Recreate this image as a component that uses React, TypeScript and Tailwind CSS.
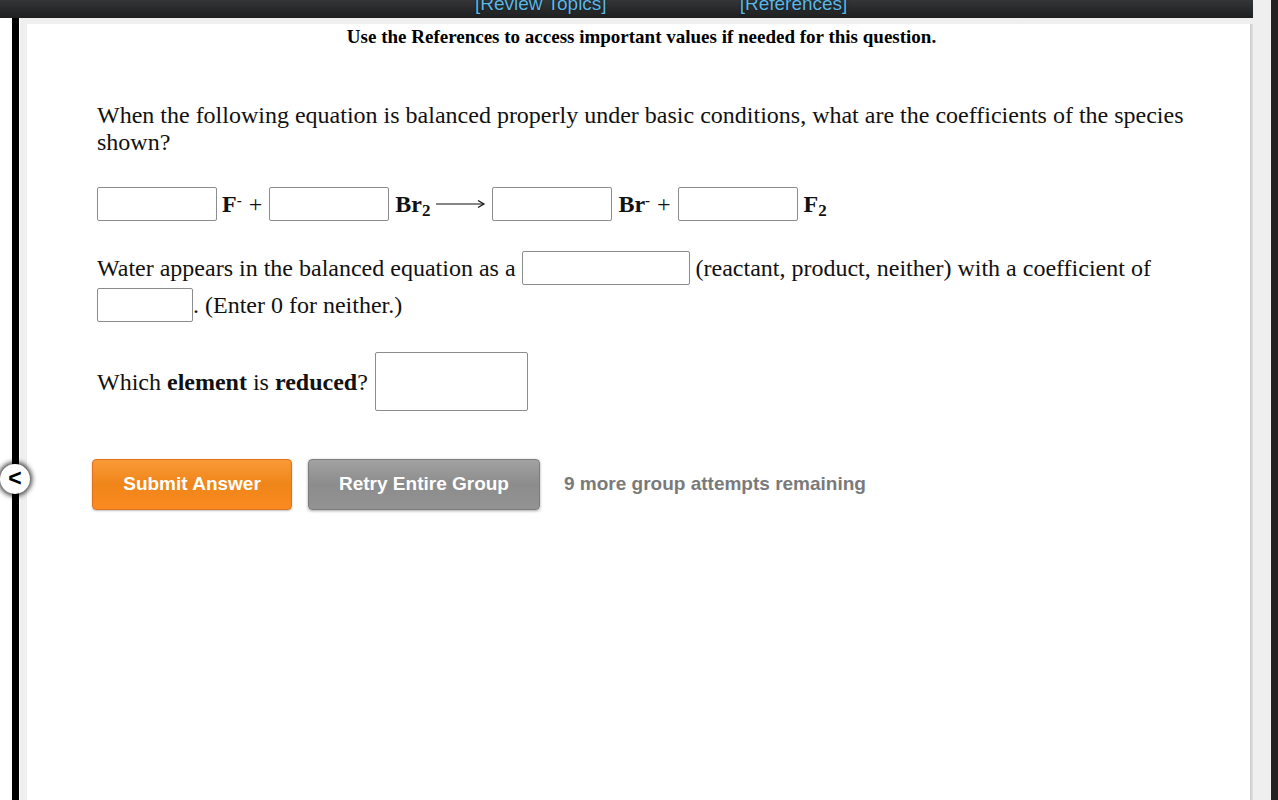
import React from "react";

const serif = { fontFamily: '"Liberation Serif", "Times New Roman", serif' };
const sans = { fontFamily: '"Liberation Sans", Arial, sans-serif' };

function Box({ w, h = 34 }: { w: number; h?: number }) {
  return (
    <span
      className="inline-block shrink-0 border border-[#8c8c8c] rounded-[2px] bg-white"
      style={{ width: w, height: h }}
    />
  );
}

function Arrow() {
  return (
    <svg width="50" height="12" viewBox="0 0 50 12" className="shrink-0 mx-[6px]">
      <line x1="0" y1="6" x2="47" y2="6" stroke="#111" strokeWidth="1.2" />
      <path d="M42 2.5 L48 6 L42 9.5" fill="none" stroke="#111" strokeWidth="1.2" />
    </svg>
  );
}

export default function App() {
  return (
    <div className="w-[1278px] h-[800px] flex bg-white overflow-hidden relative" style={serif}>
      {/* main column */}
      <div className="w-[1253px] h-full flex flex-col">
        {/* top bar */}
        <div className="h-[18px] shrink-0 bg-gradient-to-b from-[#333537] to-[#1e1f21] flex items-start pl-[475px] gap-[133px] overflow-hidden">
          <span
            className="text-[19px] leading-[19px] text-[#5cb8e6] mt-[-6px] [text-shadow:0_0_2px_rgba(0,0,0,0.8)]"
            style={sans}
          >
            [Review Topics]
          </span>
          <span
            className="text-[19px] leading-[19px] text-[#5cb8e6] mt-[-6px] [text-shadow:0_0_2px_rgba(0,0,0,0.8)]"
            style={sans}
          >
            [References]
          </span>
        </div>
        <div className="flex-1 flex">
          <div className="w-[12px] bg-white" />
          <div className="w-[7px] bg-black" />
          <div className="w-[1px] bg-white" />
          <div className="flex-1 bg-[#efefef] pl-[7px] pt-[6px] flex">
            <div className="flex-1 bg-white flex flex-col">
              <div className="pt-[2px] text-center text-[19px] leading-[22px] font-bold text-black pl-[6px]">
                Use the References to access important values if needed for this question.
              </div>
              <div className="pl-[70px] pr-[40px] text-[24px] text-[#111]">
                <p className="mt-[54px] leading-[27px]">
                  When the following equation is balanced properly under basic conditions, what are the
                  coefficients of the species shown?
                </p>

                {/* equation row */}
                <div className="mt-[31px] flex items-center h-[34px]">
                  <Box w={120} />
                  <span className="ml-[5px] font-bold">
                    F<sup className="text-[15px]">-</sup>
                  </span>
                  <span className="ml-[7px]">+</span>
                  <span className="ml-[7px] flex"><Box w={120} /></span>
                  <span className="ml-[6px] font-bold">
                    Br<sub className="text-[17px]">2</sub>
                  </span>
                  <Arrow />
                  <Box w={120} />
                  <span className="ml-[6px] font-bold">
                    Br<sup className="text-[15px]">-</sup>
                  </span>
                  <span className="ml-[7px]">+</span>
                  <span className="ml-[7px] flex"><Box w={120} /></span>
                  <span className="ml-[6px] font-bold">
                    F<sub className="text-[17px]">2</sub>
                  </span>
                </div>

                {/* water line */}
                <div className="mt-[30px] flex items-center h-[34px]">
                  <span>Water appears in the balanced equation as a</span>
                  <span className="ml-[6px] flex"><Box w={168} /></span>
                  <span className="ml-[6px]">(reactant, product, neither) with a coefficient of</span>
                </div>
                <div className="mt-[3px] flex items-center h-[34px]">
                  <Box w={96} />
                  <span>. (Enter 0 for neither.)</span>
                </div>

                {/* which element */}
                <div className="mt-[30px] flex items-center h-[59px]">
                  <span>
                    Which <b>element</b> is <b>reduced</b>?
                  </span>
                  <span className="ml-[7px] flex"><Box w={153} h={59} /></span>
                </div>

                {/* buttons */}
                <div className="mt-[48px] ml-[-5px] flex items-center" style={sans}>
                  <button
                    className="w-[200px] h-[51px] rounded-[4px] border border-[#e0721a] bg-gradient-to-b from-[#fa9a36] via-[#ef8518] to-[#fb8b22] text-white font-bold text-[19px] shadow-[0_1px_2px_rgba(0,0,0,0.25)]"
                    style={sans}
                  >
                    Submit Answer
                  </button>
                  <button
                    className="ml-[16px] w-[232px] h-[51px] rounded-[4px] border border-[#7c7c7c] bg-gradient-to-b from-[#a2a2a2] via-[#8c8c8c] to-[#939393] text-white font-bold text-[19px] shadow-[0_1px_3px_rgba(0,0,0,0.35)]"
                    style={sans}
                  >
                    Retry Entire Group
                  </button>
                  <span className="ml-[24px] text-[19px] font-bold text-[#7a7a7a]">
                    9 more group attempts remaining
                  </span>
                </div>
              </div>
            </div>
            <div className="w-[3px] bg-gradient-to-r from-[#c8c8c8] to-[#e4e4e4]" />
          </div>
        </div>
      </div>
      <div className="w-[18px] h-full bg-[#efefef]" />
      <div className="w-[7px] h-full bg-[#222222]" />

      {/* collapse circle */}
      <div
        className="absolute left-[0px] top-[464px] w-[30px] h-[30px] rounded-full bg-white flex items-center justify-center shadow-[0_0_5px_2px_rgba(0,0,0,0.75)] text-black font-bold text-[23px] leading-none"
        style={sans}
      >
        <span className="mt-[-2px]">&lt;</span>
      </div>
    </div>
  );
}
